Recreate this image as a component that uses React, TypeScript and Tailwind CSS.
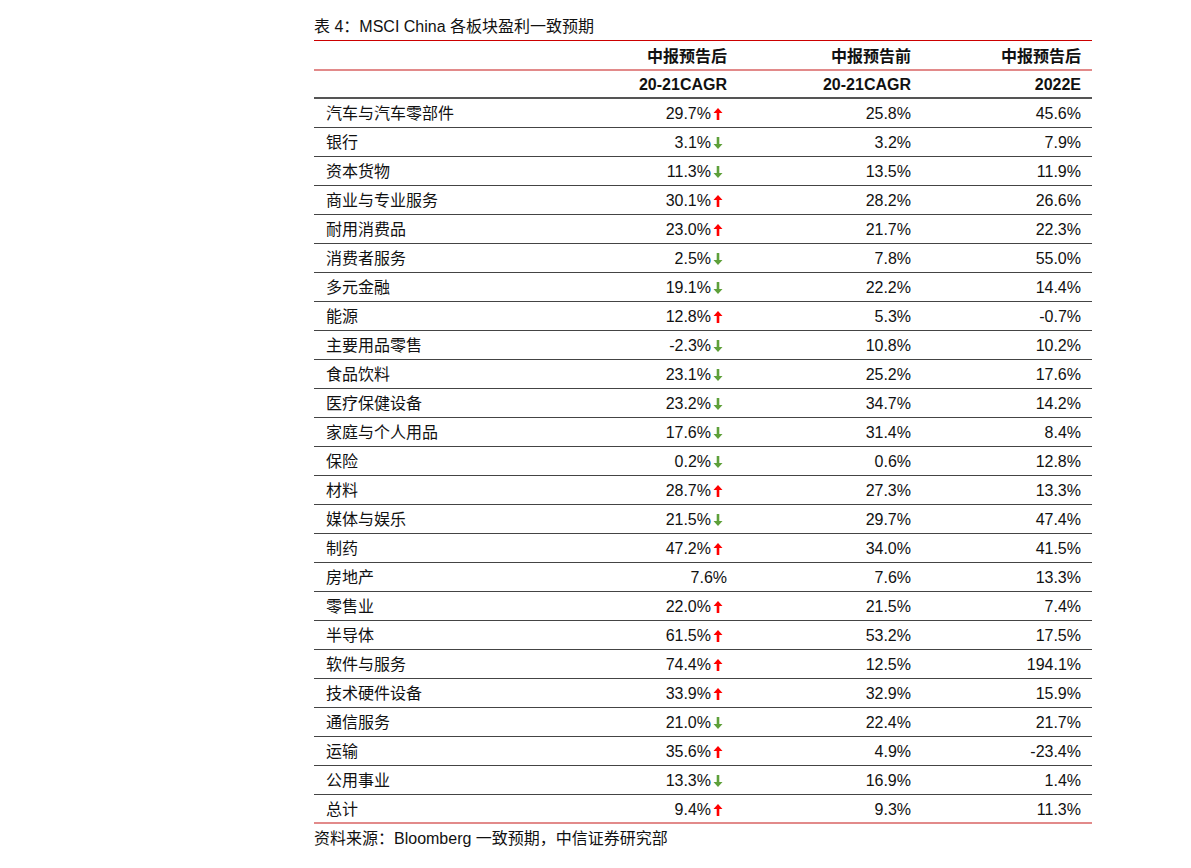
const rows: [string, string, 'up' | 'down' | '', string, string][] = [
  ['汽车与汽车零部件', '29.7%', 'up', '25.8%', '45.6%'],
  ['银行', '3.1%', 'down', '3.2%', '7.9%'],
  ['资本货物', '11.3%', 'down', '13.5%', '11.9%'],
  ['商业与专业服务', '30.1%', 'up', '28.2%', '26.6%'],
  ['耐用消费品', '23.0%', 'up', '21.7%', '22.3%'],
  ['消费者服务', '2.5%', 'down', '7.8%', '55.0%'],
  ['多元金融', '19.1%', 'down', '22.2%', '14.4%'],
  ['能源', '12.8%', 'up', '5.3%', '-0.7%'],
  ['主要用品零售', '-2.3%', 'down', '10.8%', '10.2%'],
  ['食品饮料', '23.1%', 'down', '25.2%', '17.6%'],
  ['医疗保健设备', '23.2%', 'down', '34.7%', '14.2%'],
  ['家庭与个人用品', '17.6%', 'down', '31.4%', '8.4%'],
  ['保险', '0.2%', 'down', '0.6%', '12.8%'],
  ['材料', '28.7%', 'up', '27.3%', '13.3%'],
  ['媒体与娱乐', '21.5%', 'down', '29.7%', '47.4%'],
  ['制药', '47.2%', 'up', '34.0%', '41.5%'],
  ['房地产', '7.6%', '', '7.6%', '13.3%'],
  ['零售业', '22.0%', 'up', '21.5%', '7.4%'],
  ['半导体', '61.5%', 'up', '53.2%', '17.5%'],
  ['软件与服务', '74.4%', 'up', '12.5%', '194.1%'],
  ['技术硬件设备', '33.9%', 'up', '32.9%', '15.9%'],
  ['通信服务', '21.0%', 'down', '22.4%', '21.7%'],
  ['运输', '35.6%', 'up', '4.9%', '-23.4%'],
  ['公用事业', '13.3%', 'down', '16.9%', '1.4%'],
  ['总计', '9.4%', 'up', '9.3%', '11.3%'],
]

function Arrow({ dir }: { dir: 'up' | 'down' }) {
  if (dir === 'up') {
    return (
      <svg width="16" height="14" viewBox="0 0 16 14" className="inline-block">
        <polygon points="7,1 11.5,6 8.3,6 8.3,13 5.7,13 5.7,6 2.5,6" fill="#ff0000" />
      </svg>
    )
  }
  return (
    <svg width="16" height="14" viewBox="0 0 16 14" className="inline-block">
      <polygon points="7,13 11.5,8 8.3,8 8.3,1 5.7,1 5.7,8 2.5,8" fill="#5ea03a" />
    </svg>
  )
}

export default function App() {
  return (
    <div
      className="min-h-[868px] bg-white pt-[16px] pl-[314px] text-[16px] text-[#111]"
      style={{ fontFamily: '"Liberation Sans", "Noto Sans CJK SC", sans-serif' }}
    >
      <div className="h-[24px] leading-[22px]">表 4：MSCI China 各板块盈利一致预期</div>
      <div className="w-[778px] border-t border-[#cc0000]">
        <div className="flex h-[30px] items-center border-b-2 border-[#e28a8a] pt-[3px] font-bold">
          <div className="w-[225px]" />
          <div className="w-[199px] pr-[11px] text-right">中报预告后</div>
          <div className="w-[183px] pr-[10px] text-right">中报预告前</div>
          <div className="w-[171px] pr-[11px] text-right">中报预告后</div>
        </div>
        <div className="flex h-[28px] items-center border-b-2 border-[#555] pt-[2px] font-bold">
          <div className="w-[225px]" />
          <div className="w-[199px] pr-[11px] text-right">20-21CAGR</div>
          <div className="w-[183px] pr-[10px] text-right">20-21CAGR</div>
          <div className="w-[171px] pr-[11px] text-right">2022E</div>
        </div>
        {rows.map((r, i) => (
          <div
            key={r[0]}
            className={
              i === rows.length - 1
                ? 'flex h-[29px] items-center border-b-2 border-[#e28a8a] pt-[2px]'
                : 'flex h-[29px] items-center border-b border-[#444] pt-[2px]'
            }
          >
            <div className="w-[225px] pl-[12px]">{r[0]}</div>
            <div className="flex w-[199px] items-center justify-end pr-[11px]">
              <span>{r[1]}</span>
              {r[2] && <Arrow dir={r[2]} />}
            </div>
            <div className="w-[183px] pr-[10px] text-right">{r[3]}</div>
            <div className="w-[171px] pr-[11px] text-right">{r[4]}</div>
          </div>
        ))}
      </div>
      <div className="pt-[4px] leading-[22px]">资料来源：Bloomberg 一致预期，中信证券研究部</div>
    </div>
  )
}
